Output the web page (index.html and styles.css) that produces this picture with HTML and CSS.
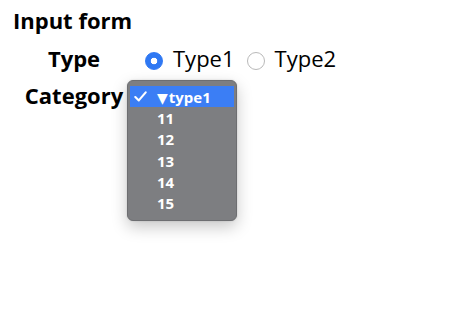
FILE: index.html
```html
<!DOCTYPE html>
<html lang="en">
<head>
<meta charset="utf-8">
<title>Input form</title>
<link rel="stylesheet" href="styles.css">
</head>
<body>
<div class="page">
  <h1 class="title">Input form</h1>
  <div class="form">
    <div class="label">Type</div>
    <div class="field radios">
      <label class="radio"><span class="dot on"></span>Type1</label>
      <label class="radio"><span class="dot"></span>Type2</label>
    </div>
    <div class="label">Category</div>
    <div class="field select-field">
      <div class="menu">
        <div class="item selected">
          <svg class="check" viewBox="0 0 13 11" width="13" height="11"><path d="M1.3 6 L4.8 9.4 L11.7 1.4" fill="none" stroke="#fff" stroke-width="2.1" stroke-linecap="round" stroke-linejoin="round"/></svg>
          <span><span class="tri">▼</span>type1</span>
        </div>
        <div class="item"><span>11</span></div>
        <div class="item"><span>12</span></div>
        <div class="item"><span>13</span></div>
        <div class="item"><span>14</span></div>
        <div class="item"><span>15</span></div>
      </div>
    </div>
  </div>
</div>
</body>
</html>
```
FILE: styles.css
```css
html, body {
  margin: 0;
  padding: 0;
  background: #fff;
}
body {
  font-family: "Open Sans", "Noto Sans CJK JP", sans-serif;
  color: #000;
  min-height: 336px;
}
.page {
  padding: 7px 0 0 13px;
  min-height: 329px;
}
.title {
  margin: 0 0 12px 0;
  font-size: 22px;
  line-height: 26px;
  font-weight: 700;
}
.form {
  display: grid;
  grid-template-columns: 108px 1fr;
  grid-auto-rows: 26px;
  row-gap: 11px;
  margin-left: 7px;
}
.label {
  font-size: 22px;
  line-height: 26px;
  font-weight: 700;
  text-align: center;
}
.field {
  position: relative;
}
.radios {
  display: flex;
  align-items: center;
  padding-left: 17px;
  gap: 12px;
}
.radio {
  display: flex;
  align-items: center;
  font-size: 22px;
  line-height: 26px;
  gap: 10px;
}
.dot {
  width: 16px;
  height: 16px;
  border-radius: 50%;
  border: 1px solid #b9b9b9;
  background: #fff;
  margin-top: 6px;
  box-sizing: content-box;
}
.dot.on {
  border-color: #2f78f3;
  background: radial-gradient(circle, #fff 0 3px, #2f78f3 3.6px);
}
.menu {
  position: absolute;
  left: -1px;
  top: -2px;
  width: 110px;
  box-sizing: border-box;
  padding: 5px 2px 6px 2px;
  background: #7d7e81;
  border: 1px solid #6d6e71;
  border-radius: 6px;
  box-shadow: 0 6px 16px rgba(0, 0, 0, 0.22), 0 0 2px rgba(0, 0, 0, 0.15);
  z-index: 2;
}
.item {
  display: flex;
  align-items: center;
  height: 21.3px;
  padding-left: 27px;
  position: relative;
  font-family: "Open Sans", sans-serif;
  font-size: 15px;
  font-weight: 700;
  color: #fff;
}
.item.selected {
  background: #3b7ef5;
}
.tri {
  font-family: "DejaVu Sans", sans-serif;
  font-size: 14px;
  margin-right: 1px;
}
.check {
  position: absolute;
  left: 4px;
  top: 5px;
}
```
